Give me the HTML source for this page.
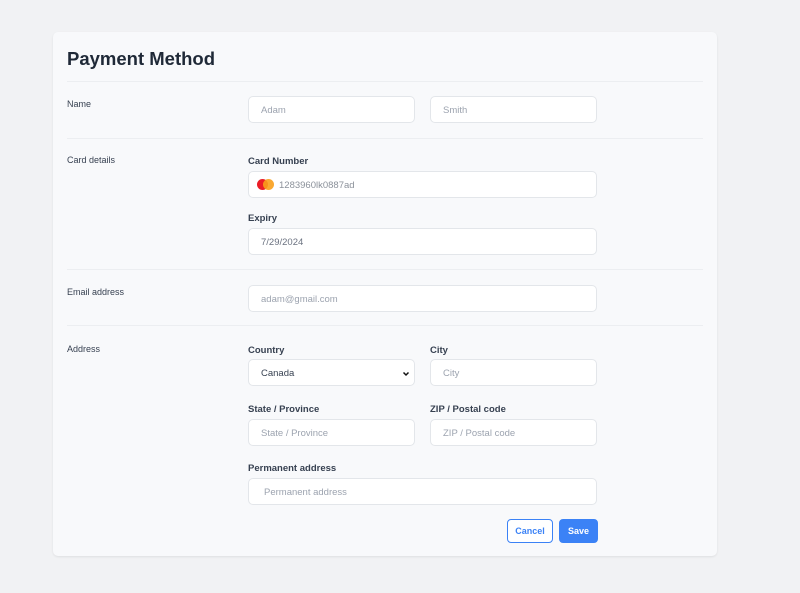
<!DOCTYPE html>
<html><head><style>
*{box-sizing:border-box;margin:0;padding:0}
body{width:800px;height:593px;background:#f1f2f4;font-family:"Liberation Sans",sans-serif;position:relative;overflow:hidden}
.card{position:absolute;left:53px;top:32px;width:664px;height:524px;background:#f8f9fb;border-radius:5px;box-shadow:0 1px 2px rgba(0,0,0,.08)}
.a{position:absolute}
h1{position:absolute;left:67px;top:48px;font-size:18.5px;font-weight:bold;color:#1f2937}
.hr{position:absolute;left:67px;width:636px;height:1px;background:#eceef1}
.sl{position:absolute;left:67px;font-size:9px;color:#374151}
.lb{position:absolute;font-size:9.5px;font-weight:bold;color:#374151}
.in{position:absolute;height:27px;background:#fff;border:1px solid #e3e6ea;border-radius:5px;font-size:9.5px;color:#9ca3af;padding-left:12px;line-height:27px}
.w1{width:167px}.w2{width:349px}
.btn{position:absolute;top:519px;height:24px;border-radius:4px;font-size:9px;font-weight:bold;text-align:center;line-height:23px}
</style></head><body>
<div class="card"></div>
<h1>Payment Method</h1>
<div class="hr" style="top:81px"></div>
<div class="hr" style="top:138px"></div>
<div class="hr" style="top:269px"></div>
<div class="hr" style="top:325px"></div>
<div class="sl" style="top:99px">Name</div>
<div class="in w1" style="left:248px;top:96px">Adam</div>
<div class="in w1" style="left:430px;top:96px">Smith</div>
<div class="sl" style="top:155px">Card details</div>
<div class="lb" style="left:248px;top:156px">Card Number</div>
<div class="in w2" style="left:248px;top:171px;padding-left:30px;color:#8b919a">1283960lk0887ad
<span class="a" style="left:8px;top:7px;width:11px;height:11px;border-radius:50%;background:#eb1c26"></span>
<span class="a" style="left:14px;top:7px;width:11px;height:11px;border-radius:50%;background:#f99f1b;opacity:.9"></span></div>
<div class="lb" style="left:248px;top:213px">Expiry</div>
<div class="in w2" style="left:248px;top:228px;color:#6b7280">7/29/2024</div>
<div class="sl" style="top:287px">Email address</div>
<div class="in w2" style="left:248px;top:285px">adam@gmail.com</div>
<div class="sl" style="top:344px">Address</div>
<div class="lb" style="left:248px;top:345px">Country</div>
<div class="lb" style="left:430px;top:345px">City</div>
<div class="in w1" style="left:248px;top:359px;color:#374151">Canada
<svg class="a" style="right:4px;top:10px" width="8" height="8" viewBox="0 0 8 8"><path d="M1.5 2.5L4 5l2.5-2.5" stroke="#111" stroke-width="1.5" fill="none"/></svg></div>
<div class="in w1" style="left:430px;top:359px">City</div>
<div class="lb" style="left:248px;top:404px">State / Province</div>
<div class="lb" style="left:430px;top:404px">ZIP / Postal code</div>
<div class="in w1" style="left:248px;top:419px">State / Province</div>
<div class="in w1" style="left:430px;top:419px">ZIP / Postal code</div>
<div class="lb" style="left:248px;top:463px">Permanent address</div>
<div class="in w2" style="left:248px;top:478px;padding-left:15px">Permanent address</div>
<div class="btn" style="left:507px;width:46px;border:1px solid #3b82f6;color:#3b82f6;background:#fff">Cancel</div>
<div class="btn" style="left:559px;width:39px;background:#3b82f6;color:#fff;border:1px solid #3b82f6">Save</div>
</body></html>
